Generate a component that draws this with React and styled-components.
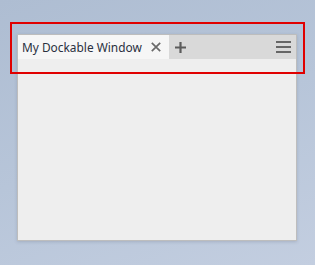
import React from "react";
import styled, { createGlobalStyle } from "styled-components";

const Global = createGlobalStyle`
  html, body { margin: 0; padding: 0; }
  body {
    width: 315px;
    height: 265px;
    overflow: hidden;
    background: linear-gradient(160deg, #aebdd2 0%, #b7c5d9 50%, #c3cee0 100%);
    font-family: "Noto Sans", "Open Sans", "DejaVu Sans", sans-serif;
  }
`;

const Stage = styled.div`
  position: relative;
  width: 315px;
  height: 265px;
  padding: 34px 0 0 17px;
  box-sizing: border-box;
`;

const Window = styled.div`
  width: 280px;
  height: 207px;
  box-sizing: border-box;
  border: 1px solid #bdbdbd;
  background: #eeeeee;
  box-shadow: 0 1px 3px rgba(90, 100, 120, 0.25);
  display: flex;
  flex-direction: column;
`;

const TabBar = styled.div`
  height: 24px;
  display: flex;
  align-items: stretch;
  background: #d9d9d9;
`;

const Tab = styled.div`
  width: 151px;
  box-sizing: border-box;
  display: flex;
  align-items: center;
  padding-left: 4px;
  background: ${(p) => (p.$active ? "#f6f6f6" : "transparent")};
`;

const TabTitle = styled.span`
  font-size: 11.9px;
  color: #2a3040;
  white-space: nowrap;
`;

const IconButton = styled.div`
  display: flex;
  align-items: center;
  justify-content: center;
  margin-left: ${(p) => p.$ml || 0}px;
  margin-right: ${(p) => p.$mr || 0}px;
`;

const Spacer = styled.div`
  flex: 1;
`;

const Body = styled.div`
  flex: 1;
`;

const Highlight = styled.div`
  position: absolute;
  left: 10px;
  top: 22px;
  width: 295px;
  height: 52px;
  box-sizing: border-box;
  border: 2px solid #e00000;
  pointer-events: none;
`;

export default function App() {
  return (
    <>
      <Global />
      <Stage>
        <Window>
          <TabBar>
            <Tab $active>
              <TabTitle>My Dockable Window</TabTitle>
              <IconButton $ml={9}>
                <svg width="10" height="10" viewBox="0 0 10 10">
                  <path d="M0.8 0.8 L9.2 9.2 M9.2 0.8 L0.8 9.2" stroke="#6a6a6a" strokeWidth="1.7" />
                </svg>
              </IconButton>
            </Tab>
            <IconButton $ml={6}>
              <svg width="11" height="11" viewBox="0 0 11 11">
                <path d="M5.5 0 V11 M0 5.5 H11" stroke="#5c5c5c" strokeWidth="2.2" />
              </svg>
            </IconButton>
            <Spacer />
            <IconButton $mr={5}>
              <svg width="15" height="12" viewBox="0 0 15 12">
                <rect x="0" y="0" width="15" height="2" fill="#666" />
                <rect x="0" y="5" width="15" height="2" fill="#666" />
                <rect x="0" y="10" width="15" height="2" fill="#666" />
              </svg>
            </IconButton>
          </TabBar>
          <Body />
        </Window>
        <Highlight />
      </Stage>
    </>
  );
}
